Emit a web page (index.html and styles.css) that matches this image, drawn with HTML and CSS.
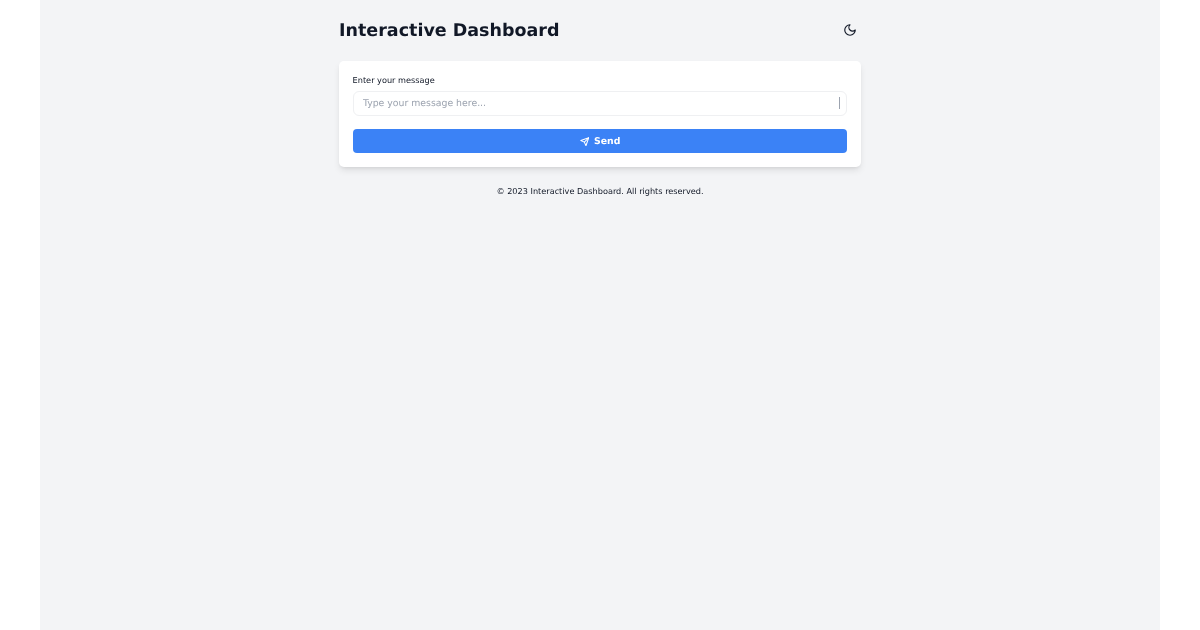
FILE: index.html
```html
<!DOCTYPE html>
<html lang="en">
<head>
<meta charset="utf-8">
<title>Interactive Dashboard</title>
<link rel="stylesheet" href="styles.css">
</head>
<body>
<div class="page">
  <main class="column">
    <header class="header">
      <h1 class="title">Interactive Dashboard</h1>
      <button class="theme" type="button" aria-label="Toggle theme">
        <svg class="moon" viewBox="0 0 24 24" fill="none" stroke="currentColor" stroke-width="2" stroke-linecap="round" stroke-linejoin="round"><path d="M12 3a6 6 0 0 0 9 9 9 9 0 1 1-9-9Z"/></svg>
      </button>
    </header>
    <section class="card">
      <label class="label" for="msg">Enter your message</label>
      <div class="field">
        <input class="input" id="msg" placeholder="Type your message here...">
        <span class="caret"></span>
      </div>
      <button class="send" type="button">
        <svg class="plane" viewBox="0 0 24 24" fill="none" stroke="currentColor" stroke-width="2.6" stroke-linecap="round" stroke-linejoin="round"><path d="m22 2-7 20-4-9-9-4Z"/><path d="M22 2 11 13"/></svg>
        <span>Send</span>
      </button>
    </section>
    <footer class="footer">© 2023 Interactive Dashboard. All rights reserved.</footer>
  </main>
</div>
</body>
</html>
```
FILE: styles.css
```css
* { box-sizing: border-box; }
html, body { margin: 0; height: 100%; }
body { background: #fff; font-family: "DejaVu Sans", sans-serif; overflow: hidden; text-rendering: geometricPrecision; }
.page { width: 1120px; height: 630px; margin: 0 auto; background: #f3f4f6; display: flex; justify-content: center; }
.column { width: 522px; padding-top: 14px; filter: blur(0.3px); }
.header { display: flex; justify-content: space-between; align-items: center; height: 32px; margin-bottom: 15px; }
.title { margin: 0; padding-top: 1px; font-size: 17.5px; line-height: 32px; font-weight: 700; color: #111827; }
.theme { width: 23px; height: 23px; padding: 0; border: 0; background: none; color: #111827; display: flex; align-items: center; justify-content: center; }
.moon { width: 14px; height: 14px; }
.card { background: #fff; border-radius: 5px; padding: 14px 13.6px; height: 106px; box-shadow: 0 4px 7px -1px rgba(0,0,0,.1), 0 2px 4px -2px rgba(0,0,0,.1); }
.label { display: block; font-size: 8.17px; line-height: 11px; color: #111827; margin-bottom: 6px; }
.field { position: relative; height: 25px; margin-bottom: 13.4px; margin-top: -1px; }
.input { display: block; width: 100%; height: 100%; padding: 0 9.3px; border: 1px solid #eff0f2; border-radius: 6px; outline: 0; background: #fff; font: 400 9.33px "DejaVu Sans", sans-serif; text-rendering: geometricPrecision; color: #111827; }
.input::placeholder { color: #9ca3af; opacity: 1; }
.caret { position: absolute; right: 7px; top: 6px; width: 1.6px; height: 12px; background: #9ca3af; }
.send { display: flex; align-items: center; justify-content: center; gap: 5px; width: 100%; height: 23.6px; padding: 0; border: 0; border-radius: 4px; background: #3b82f6; color: #fff; font: 700 9.33px "DejaVu Sans", sans-serif; text-rendering: geometricPrecision; }
.plane { width: 9.5px; height: 9.5px; margin-top: 1px; }
.footer { margin-top: 19px; text-align: center; font-size: 8.17px; line-height: 11px; color: #111827; }
```
